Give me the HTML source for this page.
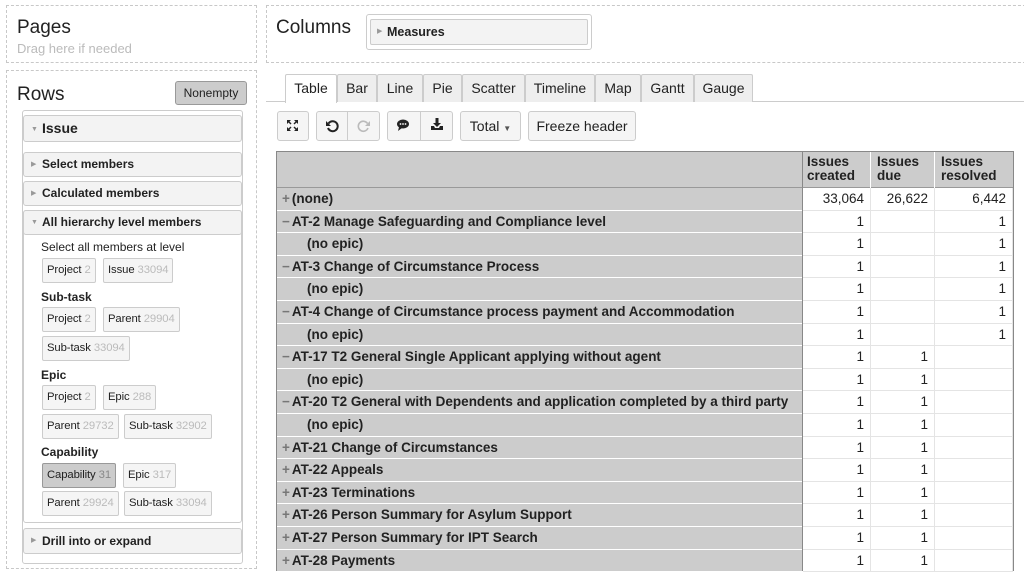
<!DOCTYPE html>
<html><head><meta charset="utf-8"><style>
*{box-sizing:border-box;margin:0;padding:0}
body{width:1024px;height:571px;overflow:hidden;background:#fff;font-family:"Liberation Sans",Arial,sans-serif;color:#222;position:relative}
.a{position:absolute}
.dash{border:1px dashed #c8c8c8}
.sec{position:absolute;left:23px;width:219px;background:#f3f3f3;border:1px solid #ccc;border-radius:3px;font-size:12px;font-weight:bold;padding-left:18px;line-height:23px}
.tri{position:absolute;left:7px;top:0;font-size:7px;color:#999;font-weight:normal}
.chip{position:absolute;height:25px;border:1px solid #ccc;border-radius:2px;background:#f5f5f5;font-size:11.3px;line-height:23px;padding:0 4px;color:#222;white-space:nowrap;letter-spacing:-0.1px}
.chip span{color:#bbb}
.lbl{position:absolute;left:41px;font-size:12px;font-weight:bold}
.tab{position:absolute;top:74px;height:28px;border:1px solid #ccc;border-bottom:none;background:#eee;font-size:14px;line-height:27px;text-align:center;border-radius:2px 2px 0 0}
.btn{position:absolute;top:111px;height:30px;border:1px solid #ccc;border-radius:3px;background:#f5f5f5;font-size:14px;line-height:28px;text-align:center}
.row{position:absolute;left:277px;width:736px;height:22.6px;font-size:13.5px}
.rh{position:absolute;left:0;top:0;width:525px;height:100%;background:#ccc;border-bottom:1px solid #fff;font-weight:bold;line-height:22px;padding-left:5px;white-space:nowrap}
.c{position:absolute;top:0;height:100%;border-bottom:1px solid #e4e4e4;border-right:1px solid #e4e4e4;text-align:right;padding-right:6px;line-height:22px;background:#fff}
.c1{left:526px;width:68px}.c2{left:594px;width:64px}.c3{left:658px;width:78px}
.pm{color:#777;font-weight:bold;margin-right:2px}
</style></head><body>
<div class="a dash" style="left:6px;top:5px;width:251px;height:58px"></div>
<div class="a" style="left:17px;top:17px;font-size:19px;color:#222">Pages</div>
<div class="a" style="left:17px;top:41px;font-size:13px;color:#bbb">Drag here if needed</div>

<div class="a dash" style="left:6px;top:70px;width:251px;height:499px"></div>
<div class="a" style="left:17px;top:84px;font-size:19px">Rows</div>
<div class="a" style="left:175px;top:81px;width:72px;height:24px;background:#ccc;border:1px solid #999;border-radius:3px;font-size:12px;line-height:22px;text-align:center">Nonempty</div>
<div class="a" style="left:22px;top:110px;width:221px;height:454px;border:1px solid #ccc;border-radius:3px"></div>
<div class="sec" style="top:115px;height:27px;font-size:14px;line-height:25px"><span class="tri" style="top:1px">▼</span>Issue</div>
<div class="sec" style="top:152px;height:25px"><span class="tri">▶</span>Select members</div>
<div class="sec" style="top:181px;height:25px"><span class="tri">▶</span>Calculated members</div>
<div class="a" style="left:23px;top:210px;width:219px;height:313px;border:1px solid #ccc;border-radius:3px;background:#fff"></div>
<div class="sec" style="top:210px;height:25px"><span class="tri">▼</span>All hierarchy level members</div>
<div class="a" style="left:41px;top:240px;font-size:12px">Select all members at level</div>
<div class="chip" style="left:42px;top:258px">Project <span>2</span></div>
<div class="chip" style="left:103px;top:258px">Issue <span>33094</span></div>
<div class="lbl" style="top:290px">Sub-task</div>
<div class="chip" style="left:42px;top:307px">Project <span>2</span></div>
<div class="chip" style="left:103px;top:307px">Parent <span>29904</span></div>
<div class="chip" style="left:42px;top:336px">Sub-task <span>33094</span></div>
<div class="lbl" style="top:368px">Epic</div>
<div class="chip" style="left:42px;top:385px">Project <span>2</span></div>
<div class="chip" style="left:103px;top:385px">Epic <span>288</span></div>
<div class="chip" style="left:42px;top:414px">Parent <span>29732</span></div>
<div class="chip" style="left:124px;top:414px">Sub-task <span>32902</span></div>
<div class="lbl" style="top:445px">Capability</div>
<div class="chip" style="left:42px;top:463px;background:#ccc;border-color:#999">Capability <span style="color:#888">31</span></div>
<div class="chip" style="left:123px;top:463px">Epic <span>317</span></div>
<div class="chip" style="left:42px;top:491px">Parent <span>29924</span></div>
<div class="chip" style="left:124px;top:491px">Sub-task <span>33094</span></div>
<div class="sec" style="top:528px;height:26px;line-height:24px"><span class="tri">▶</span>Drill into or expand</div>

<div class="a dash" style="left:266px;top:5px;width:770px;height:58px"></div>
<div class="a" style="left:276px;top:17px;font-size:19px">Columns</div>
<div class="a" style="left:366px;top:14px;width:226px;height:36px;border:1px solid #ccc;border-radius:3px"></div>
<div class="a" style="left:370px;top:19px;width:218px;height:26px;border:1px solid #ccc;border-radius:2px;background:#f3f3f3;font-size:12.5px;font-weight:bold;line-height:24px;padding-left:16px"><span style="position:absolute;left:6px;font-size:7px;color:#999;font-weight:normal">▶</span>Measures</div>

<div class="a" style="left:266px;top:101px;width:758px;height:1px;background:#ccc"></div>
<div class="tab" style="left:285px;width:52px;background:#fff;height:29px">Table</div>
<div class="tab" style="left:337px;width:40px">Bar</div>
<div class="tab" style="left:377px;width:46px">Line</div>
<div class="tab" style="left:423px;width:39px">Pie</div>
<div class="tab" style="left:462px;width:63px">Scatter</div>
<div class="tab" style="left:525px;width:70px">Timeline</div>
<div class="tab" style="left:595px;width:46px">Map</div>
<div class="tab" style="left:641px;width:53px">Gantt</div>
<div class="tab" style="left:694px;width:59px">Gauge</div>

<div class="btn" style="left:277px;width:32px"></div>
<svg class="a" style="left:286px;top:119px" width="13" height="13" viewBox="0 0 13 13"><path d="M1 1h4L3.5 2.5 5.5 4.5 4.5 5.5 2.5 3.5 1 5zM12 1v4L10.5 3.5 8.5 5.5 7.5 4.5 9.5 2.5 8 1zM1 12V8l1.5 1.5 2-2 1 1-2 2L5 12zM12 12H8l1.5-1.5-2-2 1-1 2 2L12 8z" fill="#222"/></svg>
<div class="btn" style="left:316px;width:64px"></div>
<div class="a" style="left:347px;top:111px;width:1px;height:30px;background:#ccc"></div>
<svg class="a" style="left:325px;top:119px" width="14" height="14" viewBox="0 0 14 14"><path d="M3.5 4.5A5 5 0 1 1 3 9" fill="none" stroke="#222" stroke-width="2"/><path d="M1 2v5h5z" fill="#222"/></svg>
<svg class="a" style="left:357px;top:119px" width="14" height="14" viewBox="0 0 14 14"><path d="M10.5 4.5A5 5 0 1 0 11 9" fill="none" stroke="#bbb" stroke-width="1.6"/><path d="M13 2v5H8z" fill="#bbb"/></svg>
<div class="btn" style="left:387px;width:66px"></div>
<div class="a" style="left:420px;top:111px;width:1px;height:30px;background:#ccc"></div>
<svg class="a" style="left:396px;top:118px" width="14" height="14" viewBox="0 0 14 14"><ellipse cx="7" cy="6" rx="6" ry="4.5" fill="#222"/><path d="M3 9 L2 13 L6 10Z" fill="#222"/><circle cx="4.5" cy="6" r="0.9" fill="#fff"/><circle cx="7" cy="6" r="0.9" fill="#fff"/><circle cx="9.5" cy="6" r="0.9" fill="#fff"/></svg>
<svg class="a" style="left:430px;top:117px" width="14" height="14" viewBox="0 0 14 14"><path d="M5.5 1h3v5h2.5L7 10 3 6h2.5z" fill="#222"/><path d="M1 9h3l1 2h4l1-2h3v4H1z" fill="#222"/></svg>
<div class="btn" style="left:460px;width:61px">Total <span style="font-size:8px;color:#555">▼</span></div>
<div class="btn" style="left:528px;width:108px">Freeze header</div>

<div class="a" style="left:276px;top:151px;width:738px;height:420px;border-left:1px solid #888;border-right:1px solid #888;border-top:1px solid #888"></div>
<div class="a" style="left:277px;top:152px;width:525px;height:36px;background:#ccc;border-bottom:1px solid #999"></div>
<div class="a" style="left:802px;top:152px;width:211px;height:36px;background:#ccc;border-bottom:1px solid #999;border-left:1px solid #888"></div>
<div class="a" style="left:870px;top:152px;width:1px;height:36px;background:#fff"></div>
<div class="a" style="left:934px;top:152px;width:1px;height:36px;background:#fff"></div>
<div class="a" style="left:807px;top:155px;font-size:13.5px;font-weight:bold;line-height:14px">Issues<br>created</div>
<div class="a" style="left:877px;top:155px;font-size:13.5px;font-weight:bold;line-height:14px">Issues<br>due</div>
<div class="a" style="left:941px;top:155px;font-size:13.5px;font-weight:bold;line-height:14px">Issues<br>resolved</div>
<div class="a" style="left:802px;top:188px;width:1px;height:383px;background:#888;z-index:2"></div>

<div class="row" style="top:188px"><div class="rh"><span class="pm">+</span>(none)</div><div class="c c1">33,064</div><div class="c c2">26,622</div><div class="c c3">6,442</div></div>
<div class="row" style="top:210.6px"><div class="rh"><span class="pm">−</span>AT-2 Manage Safeguarding and Compliance level</div><div class="c c1">1</div><div class="c c2"></div><div class="c c3">1</div></div>
<div class="row" style="top:233.2px"><div class="rh" style="padding-left:30px">(no epic)</div><div class="c c1">1</div><div class="c c2"></div><div class="c c3">1</div></div>
<div class="row" style="top:255.8px"><div class="rh"><span class="pm">−</span>AT-3 Change of Circumstance Process</div><div class="c c1">1</div><div class="c c2"></div><div class="c c3">1</div></div>
<div class="row" style="top:278.4px"><div class="rh" style="padding-left:30px">(no epic)</div><div class="c c1">1</div><div class="c c2"></div><div class="c c3">1</div></div>
<div class="row" style="top:301px"><div class="rh"><span class="pm">−</span>AT-4 Change of Circumstance process payment and Accommodation</div><div class="c c1">1</div><div class="c c2"></div><div class="c c3">1</div></div>
<div class="row" style="top:323.6px"><div class="rh" style="padding-left:30px">(no epic)</div><div class="c c1">1</div><div class="c c2"></div><div class="c c3">1</div></div>
<div class="row" style="top:346.2px"><div class="rh"><span class="pm">−</span>AT-17 T2 General Single Applicant applying without agent</div><div class="c c1">1</div><div class="c c2">1</div><div class="c c3"></div></div>
<div class="row" style="top:368.8px"><div class="rh" style="padding-left:30px">(no epic)</div><div class="c c1">1</div><div class="c c2">1</div><div class="c c3"></div></div>
<div class="row" style="top:391.4px"><div class="rh"><span class="pm">−</span>AT-20 T2 General with Dependents and application completed by a third party</div><div class="c c1">1</div><div class="c c2">1</div><div class="c c3"></div></div>
<div class="row" style="top:414px"><div class="rh" style="padding-left:30px">(no epic)</div><div class="c c1">1</div><div class="c c2">1</div><div class="c c3"></div></div>
<div class="row" style="top:436.6px"><div class="rh"><span class="pm">+</span>AT-21 Change of Circumstances</div><div class="c c1">1</div><div class="c c2">1</div><div class="c c3"></div></div>
<div class="row" style="top:459.2px"><div class="rh"><span class="pm">+</span>AT-22 Appeals</div><div class="c c1">1</div><div class="c c2">1</div><div class="c c3"></div></div>
<div class="row" style="top:481.8px"><div class="rh"><span class="pm">+</span>AT-23 Terminations</div><div class="c c1">1</div><div class="c c2">1</div><div class="c c3"></div></div>
<div class="row" style="top:504.4px"><div class="rh"><span class="pm">+</span>AT-26 Person Summary for Asylum Support</div><div class="c c1">1</div><div class="c c2">1</div><div class="c c3"></div></div>
<div class="row" style="top:527px"><div class="rh"><span class="pm">+</span>AT-27 Person Summary for IPT Search</div><div class="c c1">1</div><div class="c c2">1</div><div class="c c3"></div></div>
<div class="row" style="top:549.6px"><div class="rh"><span class="pm">+</span>AT-28 Payments</div><div class="c c1">1</div><div class="c c2">1</div><div class="c c3"></div></div>
</body></html>
